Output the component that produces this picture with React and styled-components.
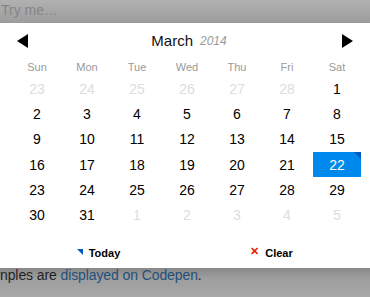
import React from 'react';
import styled, { createGlobalStyle } from 'styled-components';

const GlobalStyle = createGlobalStyle`
  body {
    margin: 0;
    background: #a9a9a9;
    font-family: "Liberation Sans", Arial, sans-serif;
    overflow: hidden;
  }
`;

const Page = styled.div`
  width: 370px;
  height: 297px;
  display: flex;
  flex-direction: column;
`;

const InputBar = styled.div`
  height: 23px;
  flex: none;
  background: linear-gradient(#b1b1b1, #9c9c9c);
  color: #858585;
  font-size: 14px;
  line-height: 20px;
  padding-left: 1px;
  white-space: nowrap;
`;

const Panel = styled.div`
  height: 245px;
  flex: none;
  background: #fff;
  padding: 0 12px;
  display: flex;
  flex-direction: column;
`;

const Header = styled.div`
  height: 34px;
  display: flex;
  align-items: center;
  justify-content: center;
  position: relative;
`;

const Month = styled.span`
  font-size: 15px;
  color: #111;
  margin-left: 8px;
`;

const Year = styled.span`
  font-size: 12px;
  font-style: italic;
  color: #9a9a9a;
  margin-left: 7px;
  margin-top: 1px;
`;

const Arrow = styled.div`
  position: absolute;
  top: 11px;
  ${(p) => (p.$side === 'left' ? 'left: 5px;' : 'right: 5px;')}
  width: 0;
  height: 0;
  border-top: 7px solid transparent;
  border-bottom: 7px solid transparent;
  ${(p) =>
    p.$side === 'left'
      ? 'border-right: 11px solid #000;'
      : 'border-left: 11px solid #000;'}
`;

const Grid = styled.div`
  display: grid;
  grid-template-columns: repeat(7, 50px);
`;

const Weekday = styled.div`
  height: 19px;
  display: flex;
  align-items: center;
  justify-content: center;
  font-size: 11px;
  color: #999;
`;

const Day = styled.div`
  height: 25.33px;
  margin: 0 1px;
  display: flex;
  align-items: center;
  justify-content: center;
  position: relative;
  font-size: 14px;
  color: ${(p) => (p.$selected ? '#fff' : p.$muted ? '#ddd' : '#000')};
  background: ${(p) => (p.$selected ? '#0089ec' : 'transparent')};

  ${(p) =>
    p.$selected &&
    `
    &::before {
      content: '';
      position: absolute;
      top: 0;
      right: 0;
      border-top: 7px solid #0059bc;
      border-left: 7px solid transparent;
    }
  `}
`;

const Footer = styled.div`
  margin-top: 10px;
  height: 30px;
  display: flex;
`;

const FooterButton = styled.div`
  flex: 1;
  display: flex;
  align-items: center;
  justify-content: center;
  gap: 6px;
  font-size: 11px;
  font-weight: bold;
  color: #000;
`;

const TodayMark = styled.span`
  width: 0;
  height: 0;
  border-top: 6px solid #0059bc;
  border-left: 6px solid transparent;
  margin-top: -2px;
`;

const ClearMark = styled.span`
  color: #e20;
  font-size: 11px;
  font-weight: bold;
  margin-top: -2px;
`;

const BottomText = styled.div`
  flex: 1;
  background: linear-gradient(#888 0%, #9d9d9d 35%, #a8a8a8 100%);
  font-size: 14px;
  color: #1f1f1f;
  line-height: 15px;
  white-space: nowrap;
  letter-spacing: -0.1px;
`;

const Link = styled.span`
  color: #244f7a;
`;

const weekdays = ['Sun', 'Mon', 'Tue', 'Wed', 'Thu', 'Fri', 'Sat'];

const days = [
  ...[23, 24, 25, 26, 27, 28].map((d) => ({ d, muted: true })),
  ...Array.from({ length: 31 }, (_, i) => ({ d: i + 1 })),
  ...[1, 2, 3, 4, 5].map((d) => ({ d, muted: true })),
];

export default function App() {
  return (
    <Page>
      <GlobalStyle />
      <InputBar>Try me…</InputBar>
      <Panel>
        <Header>
          <Arrow $side="left" />
          <Month>March</Month>
          <Year>2014</Year>
          <Arrow $side="right" />
        </Header>
        <Grid>
          {weekdays.map((w) => (
            <Weekday key={w}>{w}</Weekday>
          ))}
          {days.map((item, i) => (
            <Day
              key={i}
              $muted={item.muted}
              $selected={!item.muted && item.d === 22}
            >
              {item.d}
            </Day>
          ))}
        </Grid>
        <Footer>
          <FooterButton>
            <TodayMark />
            Today
          </FooterButton>
          <FooterButton>
            <ClearMark>✕</ClearMark>
            Clear
          </FooterButton>
        </Footer>
      </Panel>
      <BottomText>
        nples are <Link>displayed on Codepen</Link>.
      </BottomText>
    </Page>
  );
}
